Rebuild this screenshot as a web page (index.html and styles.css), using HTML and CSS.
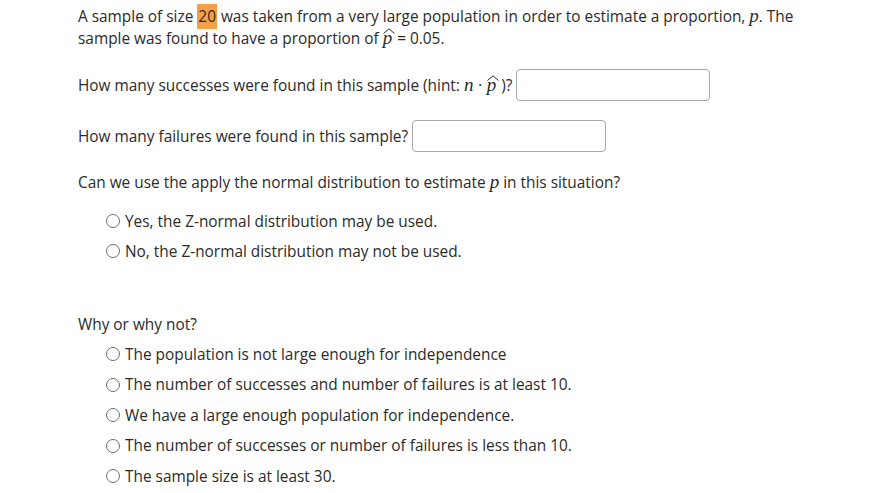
FILE: index.html
```html
<!DOCTYPE html>
<html>
<head>
<meta charset="utf-8">
<link rel="stylesheet" href="styles.css">
</head>
<body>
<div class="page">
  <div class="intro">
    A sample of size <span class="hl">20</span> was taken from a very large population in order to estimate a proportion, <span class="m">p</span>. The<br>
    sample was found to have a proportion of <span class="m hatp">p<svg class="hat" viewBox="0 0 12 6" width="12" height="6"><path d="M0.5 5.5 L6 0.8 L11.5 5.5" fill="none" stroke="#2b2b2b" stroke-width="1"/></svg></span> = 0.05.
  </div>
  <div class="qrow q1">
    <span>How many successes were found in this sample (hint: <span class="m">n</span> <span class="dot">&middot;</span> <span class="m hatp">p<svg class="hat" viewBox="0 0 12 6" width="12" height="6"><path d="M0.5 5.5 L6 0.8 L11.5 5.5" fill="none" stroke="#2b2b2b" stroke-width="1"/></svg></span> )?</span>
    <input class="answer" type="text">
  </div>
  <div class="qrow q2">
    <span>How many failures were found in this sample?</span>
    <input class="answer" type="text">
  </div>
  <div class="q3">Can we use the apply the normal distribution to estimate <span class="m">p</span> in this situation?</div>
  <div class="choices first">
    <label class="choice"><span class="radio"></span>Yes, the Z-normal distribution may be used.</label>
    <label class="choice"><span class="radio"></span>No, the Z-normal distribution may not be used.</label>
  </div>
  <div class="why">Why or why not?</div>
  <div class="choices second">
    <label class="choice"><span class="radio"></span>The population is not large enough for independence</label>
    <label class="choice"><span class="radio"></span>The number of successes and number of failures is at least 10.</label>
    <label class="choice"><span class="radio"></span>We have a large enough population for independence.</label>
    <label class="choice"><span class="radio"></span>The number of successes or number of failures is less than 10.</label>
    <label class="choice"><span class="radio"></span>The sample size is at least 30.</label>
  </div>
</div>
</body>
</html>
```
FILE: styles.css
```css
html, body {
  margin: 0;
  padding: 0;
  background: #ffffff;
}
.page {
  padding: 6px 0 0 78px;
  font-family: "Open Sans", "DejaVu Sans", sans-serif;
  font-size: 15.4px;
  color: #2b2b2b;
}
.intro {
  line-height: 22px;
}
.hl {
  background: #f5a048;
  padding: 2px 1px;
}
.m {
  font-family: "Liberation Serif", serif;
  font-style: italic;
  font-size: 19px;
  line-height: 0;
}
.hatp {
  position: relative;
  padding-right: 1px;
}
.hat {
  position: absolute;
  left: 0;
  top: 1px;
}
.dot {
  font-family: "Liberation Serif", serif;
  font-size: 16px;
  line-height: 0;
}
.qrow {
  display: flex;
  align-items: center;
  gap: 4px;
  height: 32px;
}
.q1 { margin-top: 19px; }
.q2 { margin-top: 19px; }
.answer {
  width: 194px;
  height: 32px;
  box-sizing: border-box;
  border: 1px solid #a8a8a8;
  border-radius: 4px;
  margin: 0;
  padding: 0 6px;
  background: #fff;
}
.q3 {
  margin-top: 20px;
  line-height: 22px;
}
.choices {
  padding-left: 28px;
  display: flex;
  flex-direction: column;
}
.choices.first { margin-top: 12px; }
.choices.second { margin-top: 3px; }
.choice {
  display: flex;
  align-items: center;
  height: 30px;
}
.choices.second .choice { height: 30.5px; }
.radio {
  width: 12px;
  height: 12px;
  border: 1px solid #6f6f6f;
  border-radius: 50%;
  margin-right: 5px;
  flex: none;
}
.why {
  margin-top: 48px;
  line-height: 22px;
}
```
